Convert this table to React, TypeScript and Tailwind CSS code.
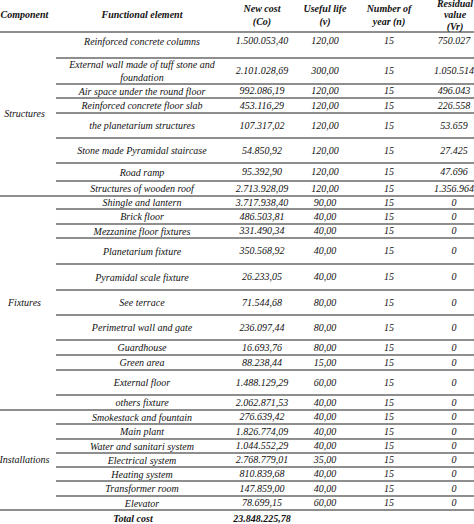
import React from "react";

type Row = { h: string; name: React.ReactNode; cost: string; life: string; year: string; res: string; extra?: string };

const structures: Row[] = [
  { h: "h-[26px]", name: "Reinforced concrete columns", cost: "1.500.053,40", life: "120,00", year: "15", res: "750.027", extra: "pb-[8px]" },
  { h: "h-[26px]", name: (<>External wall made of tuff stone and<br />foundation</>), cost: "2.101.028,69", life: "300,00", year: "15", res: "1.050.514" },
  { h: "h-[14px]", name: "Air space under the round floor", cost: "992.086,19", life: "120,00", year: "15", res: "496.043" },
  { h: "h-[15px]", name: "Reinforced concrete floor slab", cost: "453.116,29", life: "120,00", year: "15", res: "226.558" },
  { h: "h-[25px]", name: "the planetarium structures", cost: "107.317,02", life: "120,00", year: "15", res: "53.659" },
  { h: "h-[25px]", name: "Stone made Pyramidal staircase", cost: "54.850,92", life: "120,00", year: "15", res: "27.425" },
  { h: "h-[18px]", name: "Road ramp", cost: "95.392,90", life: "120,00", year: "15", res: "47.696" },
  { h: "h-[13px]", name: "Structures of wooden roof", cost: "2.713.928,09", life: "120,00", year: "15", res: "1.356.964" },
];

const fixtures: Row[] = [
  { h: "h-[13px]", name: "Shingle and lantern", cost: "3.717.938,40", life: "90,00", year: "15", res: "0" },
  { h: "h-[15px]", name: "Brick floor", cost: "486.503,81", life: "40,00", year: "15", res: "0" },
  { h: "h-[14px]", name: "Mezzanine floor fixtures", cost: "331.490,34", life: "40,00", year: "15", res: "0" },
  { h: "h-[26px]", name: "Planetarium fixture", cost: "350.568,92", life: "40,00", year: "15", res: "0" },
  { h: "h-[26px]", name: "Pyramidal scale fixture", cost: "26.233,05", life: "40,00", year: "15", res: "0" },
  { h: "h-[25px]", name: "See terrace", cost: "71.544,68", life: "80,00", year: "15", res: "0" },
  { h: "h-[25px]", name: "Perimetral wall and gate", cost: "236.097,44", life: "80,00", year: "15", res: "0" },
  { h: "h-[15px]", name: "Guardhouse", cost: "16.693,76", life: "80,00", year: "15", res: "0" },
  { h: "h-[15px]", name: "Green area", cost: "88.238,44", life: "15,00", year: "15", res: "0" },
  { h: "h-[25px]", name: "External floor", cost: "1.488.129,29", life: "60,00", year: "15", res: "0" },
  { h: "h-[13px]", name: "others fixture", cost: "2.062.871,53", life: "40,00", year: "15", res: "0" },
];

const installations: Row[] = [
  { h: "h-[14px]", name: "Smokestack and fountain", cost: "276.639,42", life: "40,00", year: "15", res: "0" },
  { h: "h-[15px]", name: "Main plant", cost: "1.826.774,09", life: "40,00", year: "15", res: "0" },
  { h: "h-[14px]", name: "Water and sanitari system", cost: "1.044.552,29", life: "40,00", year: "15", res: "0" },
  { h: "h-[14px]", name: "Electrical system", cost: "2.768.779,01", life: "35,00", year: "15", res: "0" },
  { h: "h-[14px]", name: "Heating system", cost: "810.839,68", life: "40,00", year: "15", res: "0" },
  { h: "h-[15px]", name: "Transformer room", cost: "147.859,00", life: "40,00", year: "15", res: "0" },
  { h: "h-[12px]", name: "Elevator", cost: "78.699,15", life: "60,00", year: "15", res: "0" },
];

const cell = "flex items-center justify-center text-center whitespace-nowrap";

function DataRow({ r, last }: { r: Row; last: boolean }) {
  return (
    <div className={`flex ${r.h} ${last ? "" : "border-b-2 border-[#8e8e8e]"} ${r.extra ?? ""}`}>
      <div className={`w-[172px] leading-[13px] ${cell}`}>{r.name}</div>
      <div className={`w-[68px] ${cell}`}>{r.cost}</div>
      <div className={`w-[58px] ${cell}`}>{r.life}</div>
      <div className={`w-[70px] ${cell}`}>{r.year}</div>
      <div className={`w-[66px] pr-[6px] ${cell}`}>{r.res}</div>
    </div>
  );
}

function Group({ label, rows }: { label: string; rows: Row[] }) {
  return (
    <div className="flex border-b-2 border-[#8e8e8e]">
      <div className="w-[56px] shrink-0 flex items-center justify-center pr-[7px] whitespace-nowrap">{label}</div>
      <div className="flex flex-col">
        {rows.map((r, i) => (
          <DataRow key={i} r={r} last={i === rows.length - 1} />
        ))}
      </div>
    </div>
  );
}

export default function App() {
  return (
    <div className="w-[474px] h-[524px] overflow-hidden bg-white">
      <div className="w-[490px] font-['Liberation_Serif',serif] italic text-[10px] text-[#111111] leading-none">
        <div className="flex h-[33px] border-b-2 border-[#8e8e8e] font-bold">
          <div className="w-[56px] flex items-center justify-center pr-[7px] pb-[1px]">Component</div>
          <div className="w-[172px] flex items-center justify-center pb-[1px]">Functional element</div>
          <div className="w-[68px] flex flex-col items-center justify-center leading-[13px] pb-[1px]">
            <span>New cost</span>
            <span>(Co)</span>
          </div>
          <div className="w-[58px] flex flex-col items-center justify-center leading-[13px] pb-[1px]">
            <span>Useful life</span>
            <span>(v)</span>
          </div>
          <div className="w-[70px] flex flex-col items-center justify-center leading-[13px] pb-[1px]">
            <span>Number of</span>
            <span>year (n)</span>
          </div>
          <div className="w-[66px] flex flex-col items-center justify-center leading-[11.5px] pr-[4px] pb-[1px]">
            <span>Residual</span>
            <span>value</span>
            <span>(Vr)</span>
          </div>
        </div>
        <Group label="Structures" rows={structures} />
        <Group label="Fixtures" rows={fixtures} />
        <Group label="Installations" rows={installations} />
        <div className="flex h-[16px] font-bold">
          <div className="w-[56px]" />
          <div className="w-[172px] flex items-center justify-center pr-[18px]">Total cost</div>
          <div className="w-[68px] flex items-center justify-center">23.848.225,78</div>
        </div>
      </div>
    </div>
  );
}
